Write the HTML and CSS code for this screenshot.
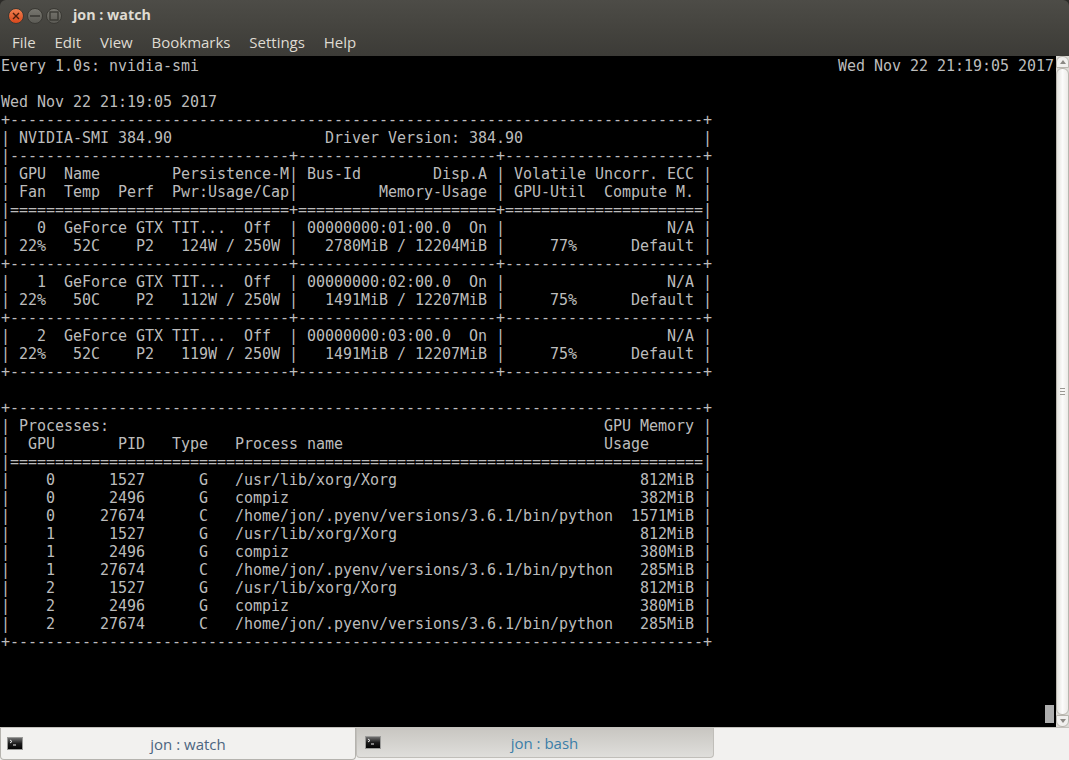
FILE: index.html
```html
<!DOCTYPE html>
<html lang="en">
<head>
    <meta charset="UTF-8">
    <title>jon : watch</title>
    <link rel="stylesheet" href="styles.css">
</head>
<body>
    <div class="window">
        <div class="titlebar">
            <div class="window-buttons">
                <span class="win-btn win-close">
                    <svg width="10" height="10" viewBox="0 0 10 10"><path d="M2 2l6 6M8 2l-6 6" stroke="#4a1d0c" stroke-width="1.4"/></svg>
                </span>
                <span class="win-btn">
                    <svg width="10" height="10" viewBox="0 0 10 10"><path d="M0 5h10" stroke="#3a3934" stroke-width="1.6"/></svg>
                </span>
                <span class="win-btn">
                    <svg width="10" height="10" viewBox="0 0 10 10"><rect x="1" y="1" width="8" height="8" fill="none" stroke="#3a3934" stroke-width="1.4"/></svg>
                </span>
            </div>
            <span class="window-title">jon : watch</span>
        </div>
        <div class="menubar">
            <span class="menu-item">File</span>
            <span class="menu-item">Edit</span>
            <span class="menu-item">View</span>
            <span class="menu-item">Bookmarks</span>
            <span class="menu-item">Settings</span>
            <span class="menu-item">Help</span>
        </div>
        <div class="terminal-area">
<pre class="terminal">Every 1.0s: nvidia-smi                                                                       Wed Nov 22 21:19:05 2017

Wed Nov 22 21:19:05 2017
+-----------------------------------------------------------------------------+
| NVIDIA-SMI 384.90                 Driver Version: 384.90                    |
|-------------------------------+----------------------+----------------------+
| GPU  Name        Persistence-M| Bus-Id        Disp.A | Volatile Uncorr. ECC |
| Fan  Temp  Perf  Pwr:Usage/Cap|         Memory-Usage | GPU-Util  Compute M. |
|===============================+======================+======================|
|   0  GeForce GTX TIT...  Off  | 00000000:01:00.0  On |                  N/A |
| 22%   52C    P2   124W / 250W |   2780MiB / 12204MiB |     77%      Default |
+-------------------------------+----------------------+----------------------+
|   1  GeForce GTX TIT...  Off  | 00000000:02:00.0  On |                  N/A |
| 22%   50C    P2   112W / 250W |   1491MiB / 12207MiB |     75%      Default |
+-------------------------------+----------------------+----------------------+
|   2  GeForce GTX TIT...  Off  | 00000000:03:00.0  On |                  N/A |
| 22%   52C    P2   119W / 250W |   1491MiB / 12207MiB |     75%      Default |
+-------------------------------+----------------------+----------------------+

+-----------------------------------------------------------------------------+
| Processes:                                                       GPU Memory |
|  GPU       PID   Type   Process name                             Usage      |
|=============================================================================|
|    0      1527      G   /usr/lib/xorg/Xorg                           812MiB |
|    0      2496      G   compiz                                       382MiB |
|    0     27674      C   /home/jon/.pyenv/versions/3.6.1/bin/python  1571MiB |
|    1      1527      G   /usr/lib/xorg/Xorg                           812MiB |
|    1      2496      G   compiz                                       380MiB |
|    1     27674      C   /home/jon/.pyenv/versions/3.6.1/bin/python   285MiB |
|    2      1527      G   /usr/lib/xorg/Xorg                           812MiB |
|    2      2496      G   compiz                                       380MiB |
|    2     27674      C   /home/jon/.pyenv/versions/3.6.1/bin/python   285MiB |
+-----------------------------------------------------------------------------+



                                                                                                                    <span class="cursor"></span></pre>
            <div class="scrollbar">
                <div class="stepper stepper-up"><span class="arrow arrow-up"></span></div>
                <div class="thumb">
                    <span class="grip"></span>
                    <span class="grip"></span>
                    <span class="grip"></span>
                </div>
                <div class="stepper stepper-down"><span class="arrow arrow-down"></span></div>
            </div>
        </div>
        <div class="tabbar">
            <div class="tab tab-active">
                <svg class="tab-icon" width="16" height="13" viewBox="0 0 16 13">
                    <defs><linearGradient id="screen" x1="0" y1="0" x2="0" y2="1"><stop offset="0" stop-color="#777"/><stop offset=".5" stop-color="#1c1c1c"/><stop offset="1" stop-color="#000"/></linearGradient></defs>
                    <rect x=".5" y=".5" width="15" height="12" fill="url(#screen)" stroke="#9a9a98"/><path d="M3 3l2 1.5L3 6" fill="none" stroke="#eee"/><path d="M6 8h3" stroke="#eee"/>
                </svg>
                <span class="tab-label">jon : watch</span>
            </div>
            <div class="tab tab-inactive">
                <svg class="tab-icon" width="16" height="13" viewBox="0 0 16 13">
                    <rect x=".5" y=".5" width="15" height="12" fill="url(#screen)" stroke="#9a9a98"/><path d="M3 3l2 1.5L3 6" fill="none" stroke="#eee"/><path d="M6 8h3" stroke="#eee"/>
                </svg>
                <span class="tab-label">jon : bash</span>
            </div>
        </div>
    </div>
</body>
</html>
```

FILE: styles.css
```css
html, body {
    margin: 0;
    height: 100%;
    background-color: #2c2b28;
    overflow: hidden;
}
.window {
    display: flex;
    flex-direction: column;
    height: 760px;
    font-family: 'Open Sans', sans-serif;
}
.titlebar {
    display: flex;
    align-items: center;
    height: 30px;
    padding-left: 8px;
    background: linear-gradient(#4d4c47, #44433e);
    border-radius: 6px 6px 0 0;
    flex: none;
}
.window-buttons {
    display: flex;
    gap: 3px;
    padding-top: 1px;
}
.win-btn {
    display: flex;
    align-items: center;
    justify-content: center;
    width: 14px;
    height: 14px;
    border-radius: 50%;
    border: 1px solid #3a3934;
    background: linear-gradient(#77766f, #5c5b55);
}
.win-close {
    background: linear-gradient(#f08050, #d9481c);
}
.window-title {
    margin: 0 0 1px 11px;
    color: #dfdbd2;
    font-size: 14.3px;
    font-weight: 700;
}
.menubar {
    display: flex;
    align-items: center;
    height: 23px;
    padding: 0 0 3px 2.6px;
    background: linear-gradient(#44433e, #3c3b37);
    flex: none;
}
.menu-item {
    padding: 0 9.4px;
    color: #dfdbd2;
    font-size: 15px;
}
.terminal-area {
    display: flex;
    height: 671px;
    background-color: #000;
    flex: none;
}
.terminal {
    flex: 1;
    margin: 0;
    padding: 1px 0 0 1px;
    color: #bcbcbc;
    font-family: 'DejaVu Sans Mono', monospace;
    font-size: 15px;
    line-height: 18px;
    letter-spacing: -0.03px;
    overflow: hidden;
}
.cursor {
    display: inline-block;
    width: 9px;
    height: 18px;
    background-color: #aeaeae;
    vertical-align: top;
}
.scrollbar {
    display: flex;
    flex-direction: column;
    width: 13px;
    background: #dcdad5;
    flex: none;
}
.stepper {
    display: flex;
    align-items: center;
    justify-content: center;
    height: 12px;
    box-sizing: border-box;
    border: 1px solid #b8b5ae;
    background: #f1f0ee;
    flex: none;
}
.stepper-up {
    border-radius: 6px 6px 0 0;
}
.stepper-down {
    border-radius: 0 0 6px 6px;
}
.arrow {
    width: 0;
    height: 0;
    border-left: 3px solid transparent;
    border-right: 3px solid transparent;
}
.arrow-up {
    border-bottom: 4px solid #8a8883;
}
.arrow-down {
    border-top: 4px solid #8a8883;
}
.thumb {
    flex: 1;
    display: flex;
    flex-direction: column;
    align-items: center;
    justify-content: center;
    gap: 2px;
    box-sizing: border-box;
    border: 1px solid #b8b5ae;
    border-radius: 6px;
    background: linear-gradient(90deg, #e4e2de, #fbfbfa 50%, #eceae7);
}
.grip {
    width: 5px;
    height: 1px;
    background-color: #9a9893;
}
.tabbar {
    display: flex;
    align-items: flex-start;
    flex: 1;
    background-color: #f2f1ef;
    border-top: 1px solid #c4c2bd;
}
.tab {
    display: flex;
    align-items: center;
    box-sizing: border-box;
    font-size: 15px;
}
.tab-label {
    flex: 1;
    padding-top: 1px;
    text-align: center;
}
.tab-active {
    width: 356px;
    height: 32px;
    padding: 0 2px 0 6px;
    background-color: #f2f1ef;
    border: 1px solid #b5b3ae;
    border-top: none;
    border-radius: 0 0 4px 4px;
    color: #4c6580;
}
.tab-inactive {
    width: 358px;
    height: 30px;
    padding: 0 5px 0 8px;
    background: linear-gradient(#c8c6c1, #dfdedb);
    border: 1px solid #c0beb9;
    border-top: none;
    border-radius: 0 0 4px 4px;
    color: #3b7ea8;
}
.tab-icon {
    flex: none;
}
```
